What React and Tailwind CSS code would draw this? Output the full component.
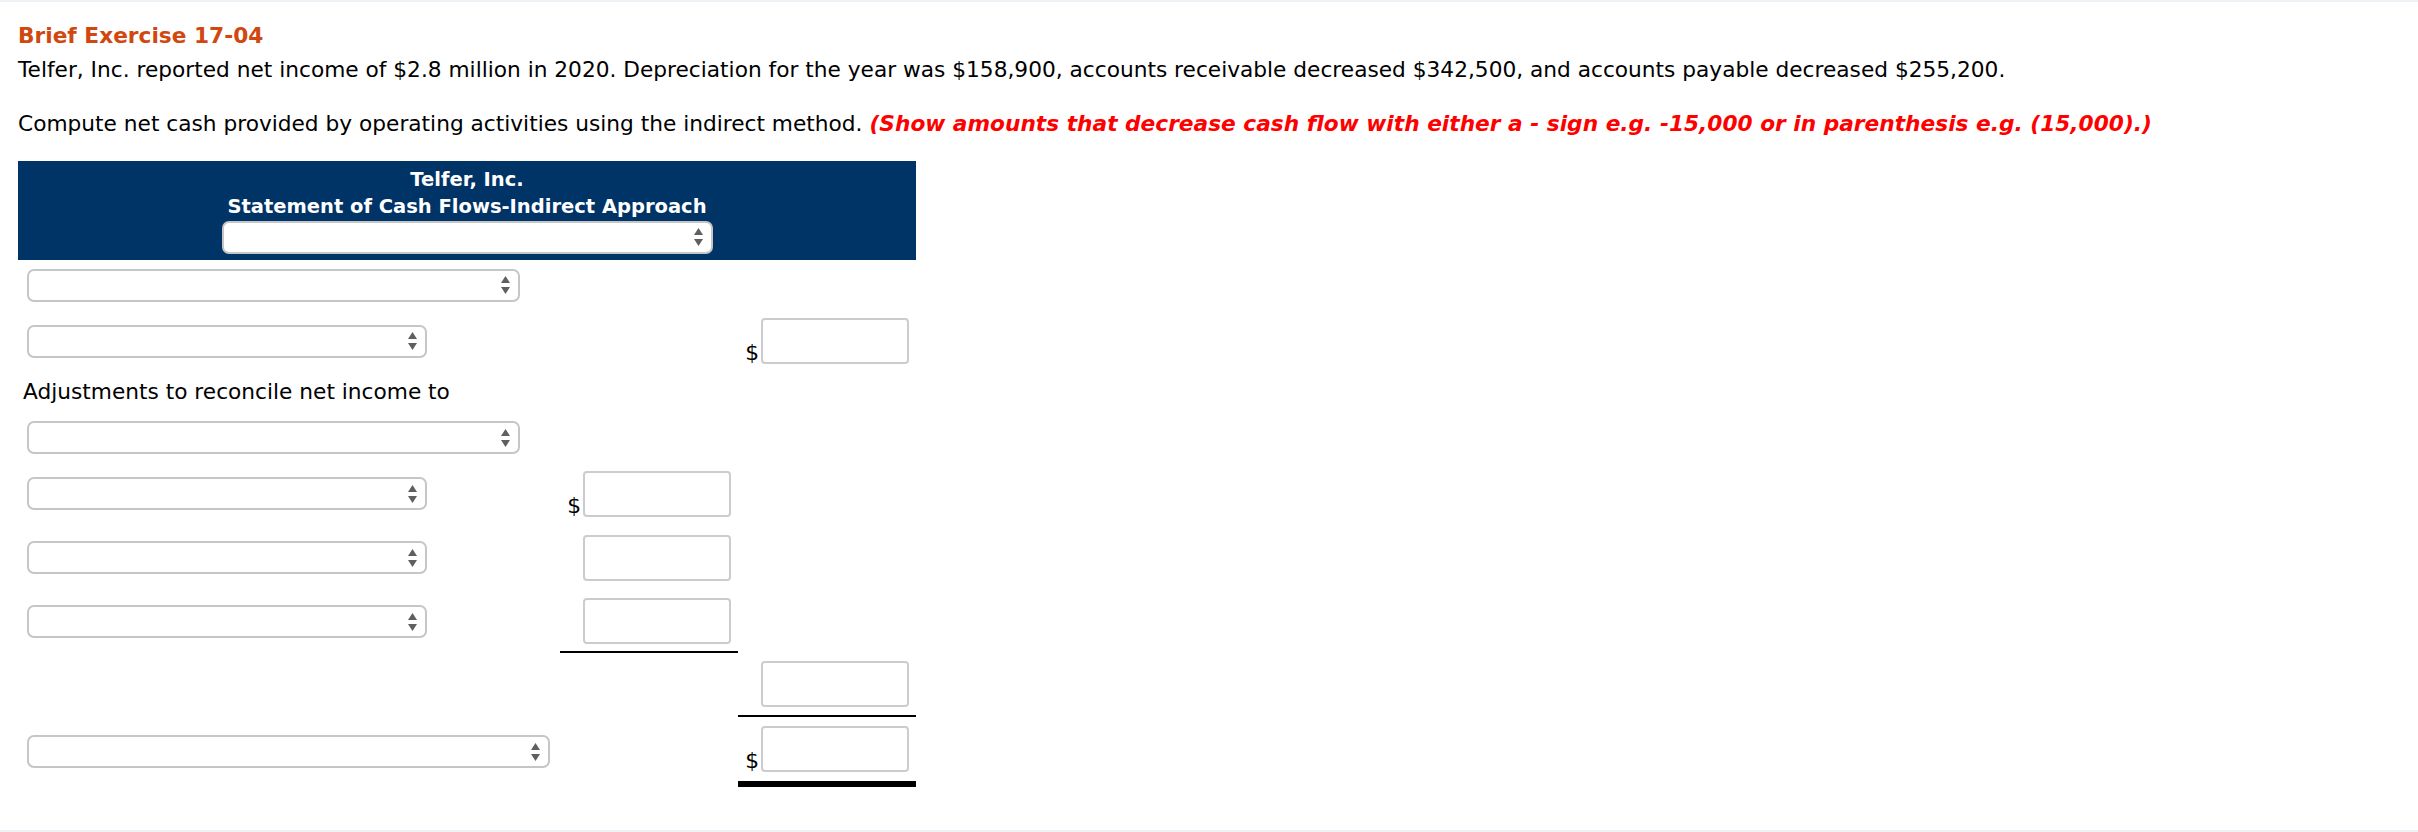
import React from 'react';

function Arrows() {
  return (
    <svg width="9" height="18" viewBox="0 0 9 18" className="pointer-events-none absolute right-[10px] top-1/2 -translate-y-1/2">
      <polygon points="4.5,0 9,7 0,7" fill="#5f5f5f" />
      <polygon points="0,11 9,11 4.5,18" fill="#5f5f5f" />
    </svg>
  );
}

function Dropdown({ width }) {
  return (
    <div className={`relative h-[33px] ${width}`}>
      <select className="h-full w-full appearance-none rounded-[7px] border-2 border-[#c6c6c6] bg-white outline-none">
        <option value=""></option>
      </select>
      <Arrows />
    </div>
  );
}

function Amount({ dollar }) {
  return (
    <div className="flex items-end">
      {dollar && <span className="mr-[2px] leading-none">$</span>}
      <input
        type="text"
        className="h-[46px] w-[148px] rounded-[4px] border-2 border-[#cccccc] bg-white outline-none"
      />
    </div>
  );
}

function Row({ h, left, mid, right, midLine = '', rightLine = '', pad = 'pl-[9px]' }) {
  return (
    <div className={`flex ${h}`}>
      <div className={`flex w-[542px] items-center ${pad}`}>{left}</div>
      <div className={`flex w-[178px] items-center justify-end pr-[7px] ${midLine}`}>{mid}</div>
      <div className={`flex w-[178px] items-center justify-end pr-[7px] ${rightLine}`}>{right}</div>
    </div>
  );
}

export default function App() {
  return (
    <div className="h-[832px] w-full border-y-2 border-[#eef3f8] bg-white px-[18px] font-['DejaVu_Sans',Verdana,sans-serif] text-[21.7px] text-black">
      <h1 className="mt-[16.5px] text-[21.7px] font-bold leading-[34px] text-[#d0480f]">Brief Exercise 17-04</h1>
      <p className="leading-[34px]">
        Telfer, Inc. reported net income of $2.8 million in 2020. Depreciation for the year was $158,900, accounts
        receivable decreased $342,500, and accounts payable decreased $255,200.
      </p>
      <p className="mt-[20px] leading-[34px]">
        Compute net cash provided by operating activities using the indirect method.{' '}
        <span className="font-bold italic text-[#ff0000]">
          (Show amounts that decrease cash flow with either a - sign e.g. -15,000 or in parenthesis e.g. (15,000).)
        </span>
      </p>

      <div className="mt-[20px] w-[898px]">
        <div className="flex h-[99px] flex-col items-center bg-[#003366] pt-[5px] text-[19.5px] font-bold leading-[27px] text-white">
          <div>Telfer, Inc.</div>
          <div>Statement of Cash Flows-Indirect Approach</div>
          <div className="mt-[1px]">
            <Dropdown width="w-[491px]" />
          </div>
        </div>

        <Row h="h-[51px]" left={<Dropdown width="w-[493px]" />} />
        <Row h="h-[61px]" left={<Dropdown width="w-[400px]" />} right={<Amount dollar />} />
        <Row h="h-[41px]" pad="pl-[5px]" left={<span className="leading-[24px]">Adjustments to reconcile net income to</span>} />
        <Row h="h-[50px]" left={<Dropdown width="w-[493px]" />} />
        <Row h="h-[62px]" left={<Dropdown width="w-[400px]" />} mid={<Amount dollar />} />
        <Row h="h-[66px]" left={<Dropdown width="w-[400px]" />} mid={<Amount />} />
        <Row h="h-[62px]" left={<Dropdown width="w-[400px]" />} mid={<Amount />} midLine="border-b-2 border-black" />
        <Row h="h-[64px]" right={<Amount />} rightLine="border-b-2 border-black" />
        <Row
          h="h-[70px]"
          left={<Dropdown width="w-[523px]" />}
          right={<Amount dollar />}
          rightLine="border-b-[6px] border-black"
        />
      </div>
    </div>
  );
}
